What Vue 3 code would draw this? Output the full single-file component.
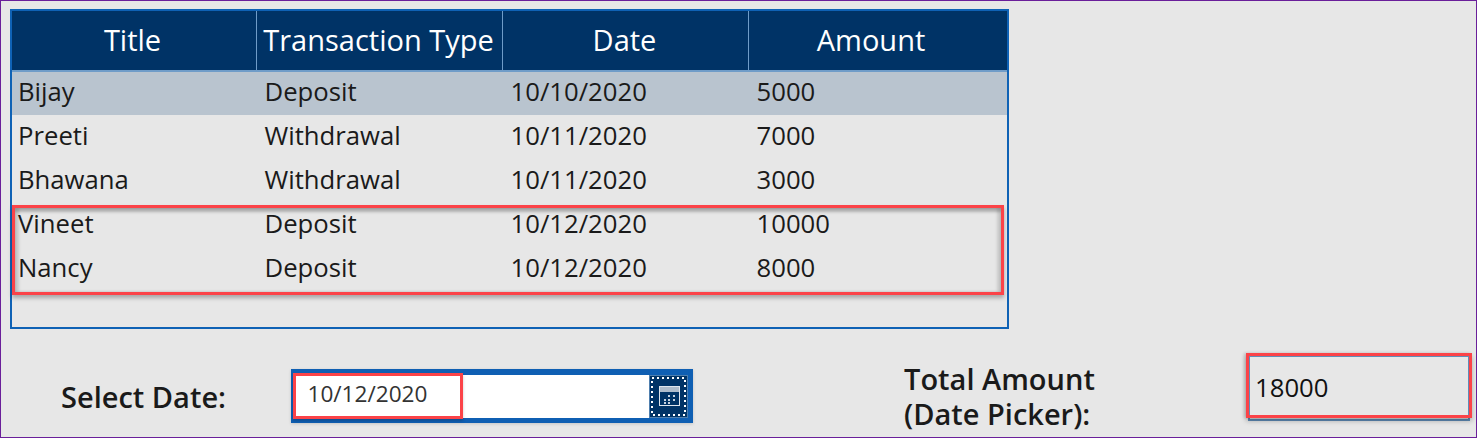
<script setup>
const columns = ['Title', 'Transaction Type', 'Date', 'Amount']
const rows = [
  ['Bijay', 'Deposit', '10/10/2020', '5000'],
  ['Preeti', 'Withdrawal', '10/11/2020', '7000'],
  ['Bhawana', 'Withdrawal', '10/11/2020', '3000'],
  ['Vineet', 'Deposit', '10/12/2020', '10000'],
  ['Nancy', 'Deposit', '10/12/2020', '8000']
]
const dots = [[19,20],[24,20],[15,24],[19,24],[24,24],[15,27],[19,27]]
</script>

<template>
  <div class="page">
    <section class="table">
      <div class="head">
        <div v-for="c in columns" :key="c" class="th">{{ c }}</div>
      </div>
      <div v-for="(r, i) in rows" :key="r[0]" class="row" :class="{ selected: i === 0 }">
        <div v-for="v in r" :key="v" class="td">{{ v }}</div>
      </div>
      <div class="mark mark-rows"></div>
    </section>

    <section class="bottom">
      <div class="label date-label">Select Date:</div>
      <div class="picker">
        <div class="picker-input">
          <span class="picker-value">10/12/2020</span>
          <div class="mark mark-date"></div>
        </div>
        <div class="picker-btn">
          <svg width="39" height="43" viewBox="0 0 39 43" fill="none">
            <rect width="39" height="43" fill="#003366" />
            <rect x="0.5" y="0.5" width="38" height="42" stroke="#4f7fae" />
            <rect x="3" y="3" width="33" height="37" stroke="#fff" stroke-width="2" stroke-dasharray="2 3" />
            <rect x="10.5" y="11.5" width="20" height="19" stroke="#dfe6ee" />
            <rect x="11" y="12" width="19" height="5" fill="#aebccb" />
            <rect v-for="d in dots" :key="d.join()" :x="d[0]" :y="d[1]" width="2" height="2" fill="#c7d3df" />
          </svg>
        </div>
      </div>
      <div class="label total-label">Total Amount<br />(Date Picker):</div>
      <div class="total">
        18000
        <div class="mark mark-total"></div>
      </div>
    </section>
  </div>
</template>

<style>
html, body { margin: 0; padding: 0; }
</style>

<style scoped>
.page {
  box-sizing: border-box;
  width: 1477px;
  height: 438px;
  overflow: hidden;
  background: #e7e7e7;
  border: 1px solid #6a1f9a;
  padding: 8px 0 0 9px;
  font-family: "Open Sans", sans-serif;
  color: #1a1a1a;
}
.table {
  position: relative;
  box-sizing: border-box;
  width: 999px;
  height: 320px;
  border: 2px solid #0f62b5;
}
.head {
  display: flex;
  box-sizing: border-box;
  height: 61px;
  background: #003366;
  border-bottom: 2px solid #6f9cc8;
}
.th {
  box-sizing: border-box;
  width: 246px;
  padding-right: 2px;
  border-right: 1px solid #6f9cc8;
  color: #fff;
  font-size: 29px;
  line-height: 58px;
  text-align: center;
  white-space: nowrap;
}
.th:first-child { width: 245px; padding-right: 3px; }
.th:last-child { border-right: 0; }
.row {
  display: flex;
  height: 44px;
}
.row.selected { height: 43px; background: #b9c4cf; }
.td {
  box-sizing: border-box;
  width: 246px;
  padding-left: 6.5px;
  font-size: 25.7px;
  line-height: 42px;
  white-space: nowrap;
}
.selected .td { line-height: 40px; }
.td:first-child { padding-left: 6px; }
.mark {
  position: absolute;
  box-sizing: border-box;
  border: 3px solid #fb4348;
  box-shadow: 0 3px 4px rgba(0, 0, 0, 0.28), inset 0 4px 3px rgba(0, 0, 0, 0.24),
    inset 4px 0 3px rgba(0, 0, 0, 0.12), inset -4px 0 3px rgba(0, 0, 0, 0.12);
  pointer-events: none;
}
.mark-rows { left: 0; top: 194px; width: 992px; height: 90px; }
.bottom {
  display: flex;
  align-items: flex-start;
  margin-top: 40px;
}
.label {
  box-sizing: content-box;
  font-size: 29px;
  font-weight: 600;
  line-height: 36px;
  color: #1a1a1a;
  white-space: nowrap;
}
.date-label { width: 230px; padding: 10px 0 0 51px; }
.picker {
  display: flex;
  box-sizing: border-box;
  width: 402px;
  height: 54px;
  background: #0f5fb3;
  padding: 6px 0 5px 5px;
  box-shadow: 0 1px 3px rgba(0, 0, 0, 0.15);
}
.picker-input {
  position: relative;
  flex: 1;
  background: #fff;
  padding-left: 11.5px;
  font-size: 22.6px;
  line-height: 38px;
  color: #333;
}
.mark-date {
  left: -3px;
  top: -2px;
  width: 170px;
  height: 46px;
  box-shadow: 0 2px 3px rgba(0, 0, 0, 0.2);
}
.picker-btn {
  display: flex;
  width: 39px;
  height: 43px;
  margin-right: 5px;
}
.total-label {
  width: 344px;
  margin-left: 211px;
  margin-top: -8px;
  line-height: 35px;
}
.total {
  position: relative;
  box-sizing: border-box;
  width: 222px;
  height: 66px;
  margin-top: -14px;
  padding-left: 5px;
  font-size: 25.7px;
  line-height: 62px;
  color: #111;
  border: 2px solid #5f8db8;
}
.mark-total {
  left: -4px;
  top: -4px;
  width: 226px;
  height: 65px;
  box-shadow: 0 3px 5px rgba(0, 0, 0, 0.25), -2px 0 3px rgba(0, 0, 0, 0.15);
}
</style>
